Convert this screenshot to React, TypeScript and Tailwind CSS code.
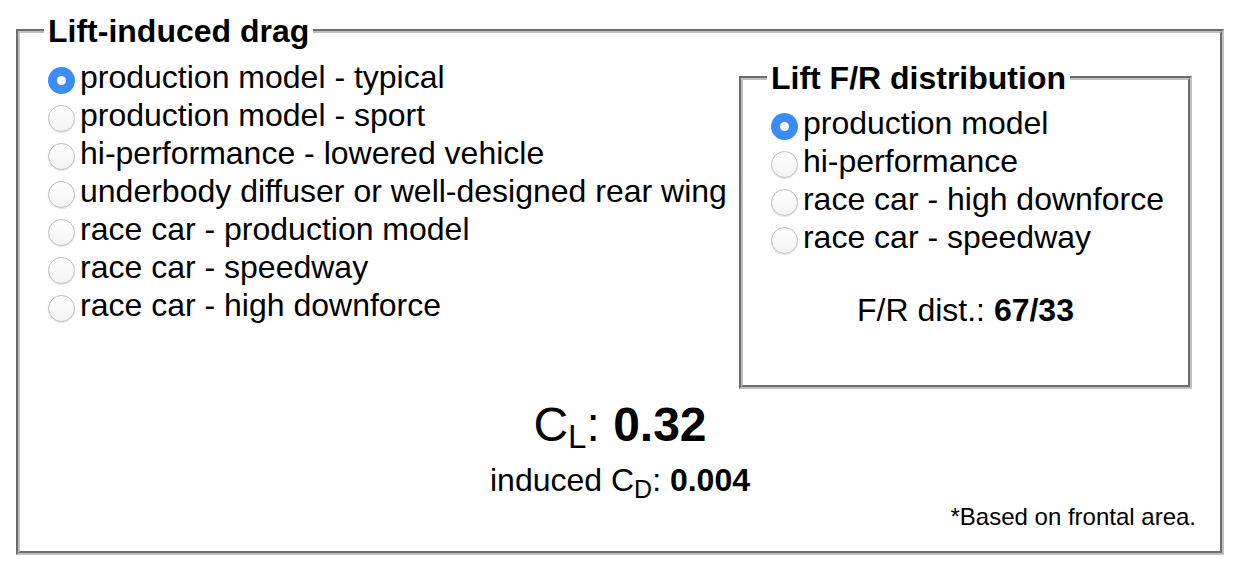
import React from "react";

const dragOptions = [
  "production model - typical",
  "production model - sport",
  "hi-performance - lowered vehicle",
  "underbody diffuser or well-designed rear wing",
  "race car - production model",
  "race car - speedway",
  "race car - high downforce",
];

const distOptions = [
  "production model",
  "hi-performance",
  "race car - high downforce",
  "race car - speedway",
];

function Radio({ checked }: { checked: boolean }) {
  if (checked) {
    return (
      <span className="mt-[6px] mr-[5px] flex h-[27px] w-[27px] shrink-0 items-center justify-center rounded-full bg-[#3d8bf7]">
        <span className="h-[9px] w-[9px] rounded-full bg-white" />
      </span>
    );
  }
  return (
    <span className="mt-[6px] mr-[5px] h-[27px] w-[27px] shrink-0 rounded-full border-[1.5px] border-[#bdbdbd] bg-gradient-to-b from-white to-[#f4f4f4] shadow-[0_1px_1px_rgba(0,0,0,0.12)]" />
  );
}

function RadioList({ items, selected }: { items: string[]; selected: number }) {
  return (
    <div className="flex flex-col pl-[4px]">
      {items.map((label, i) => (
        <label key={label} className="flex h-[38px] items-center leading-[38px] whitespace-nowrap">
          <Radio checked={i === selected} />
          <span>{label}</span>
        </label>
      ))}
    </div>
  );
}

export default function App() {
  return (
    <div className="h-[580px] w-[1250px] overflow-hidden bg-white pt-[13px] text-[32px] text-black [font-family:'Liberation_Sans',Arial,sans-serif]">
      <fieldset className="ml-[16px] flex h-[542px] w-[1208px] flex-col border-4 border-[#c0c0c0] px-[24px] pt-0 [--tw-border-style:groove] [border-style:groove]">
        <legend className="px-[4px] text-[32px] leading-[36px] font-bold">Lift-induced drag</legend>

        {/* options + distribution box */}
        <div className="flex items-start">
          <div className="mt-[9px]">
            <RadioList items={dragOptions} selected={0} />
          </div>

          <fieldset className="mt-[11px] mr-[4px] ml-auto h-[329px] w-[452px] border-4 border-[#c0c0c0] px-[24px] pt-0 [--tw-border-style:groove] [border-style:groove]">
            <legend className="px-[4px] text-[32px] leading-[36px] font-bold">Lift F/R distribution</legend>
            <div className="mt-[8px]">
              <RadioList items={distOptions} selected={0} />
            </div>
            <div className="mt-[35px] text-center leading-[38px]">
              F/R dist.: <b>67/33</b>
            </div>
          </fieldset>
        </div>

        {/* results */}
        <div className="mt-[8px] text-center text-[48px] leading-[56px]">
          C<span className="relative top-[7px] text-[33px]">L</span>: <b>0.32</b>
        </div>
        <div className="mt-[3px] text-center leading-[38px]">
          induced C<span className="relative top-[7px] text-[25px]">D</span>: <b>0.004</b>
        </div>
        <div className="mt-[2px] text-right text-[24px] leading-[28px]">*Based on frontal area.</div>
      </fieldset>
    </div>
  );
}
